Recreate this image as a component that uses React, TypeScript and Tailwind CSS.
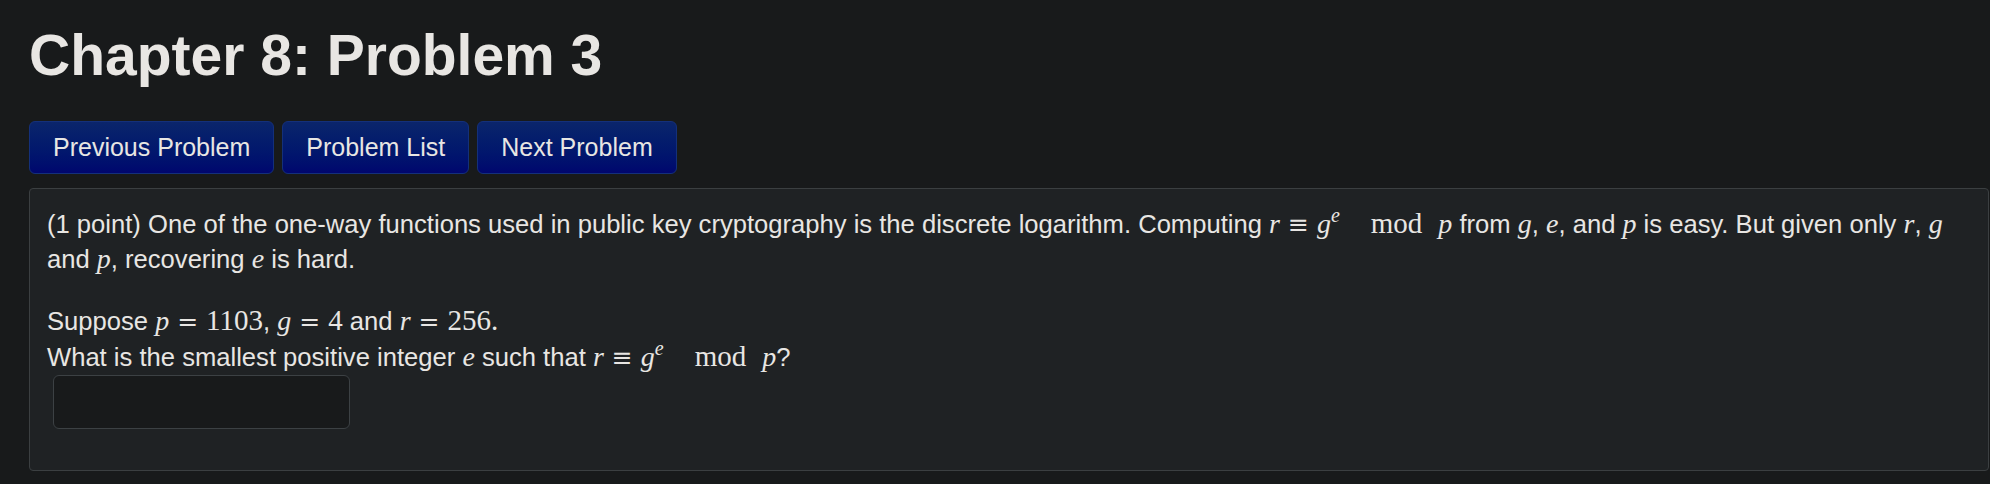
import React from "react";

function V({ children }: { children: React.ReactNode }) {
  return <span className="font-['Liberation_Serif',serif] italic text-[28px] leading-none">{children}</span>;
}

function N({ children }: { children: React.ReactNode }) {
  return <span className="font-['Liberation_Serif',serif] text-[29px] leading-none">{children}</span>;
}

function Rel({ children }: { children: React.ReactNode }) {
  return <span className="font-['DejaVu_Serif',serif] text-[25px] leading-none mx-[8px]">{children}</span>;
}

function Mod() {
  return (
    <span className="font-['Liberation_Serif',serif] text-[29px] leading-none">
      <V>g</V>
      <span className="font-['Liberation_Serif',serif] italic text-[20px] leading-none relative -top-[11px]">e</span>
      <span className="ml-[31px] mr-[16px]">mod</span>
      <V>p</V>
    </span>
  );
}

export default function App() {
  const buttons = ["Previous Problem", "Problem List", "Next Problem"];
  return (
    <div className="min-h-screen bg-[#181a1b] text-[#e8e6e3] font-['Liberation_Sans',Arial,sans-serif] pl-[29px] pr-[1px]">
      <h1 className="pt-[27px] text-[57px] leading-none font-bold">Chapter 8: Problem 3</h1>

      <div className="mt-[37px] flex gap-2">
        {buttons.map((b) => (
          <button
            key={b}
            className="h-[53px] px-[23px] flex items-center rounded-[6px] border border-[#14307a] bg-gradient-to-b from-[#0b256b] to-[#00066e] text-[25px] text-[#e8e6e3]"
          >
            {b}
          </button>
        ))}
      </div>

      <div className="mt-[14px] border border-[#3b3f41] rounded-[4px] bg-[#1f2224] pt-[18px] pl-[17px] pr-[17px] pb-[41px] text-[25.6px] leading-[35px]">
        <p className="mb-[26px]">
          (1 point) One of the one-way functions used in public key cryptography is the discrete logarithm. Computing{" "}
          <V>r</V>
          <Rel>≡</Rel>
          <Mod /> from <V>g</V>, <V>e</V>, and <V>p</V> is easy. But given only <V>r</V>, <V>g</V> and <V>p</V>,
          recovering <V>e</V> is hard.
        </p>
        <p className="leading-[37px]">
          Suppose <V>p</V>
          <Rel>=</Rel>
          <N>1103</N>, <V>g</V>
          <Rel>=</Rel>
          <N>4</N> and <V>r</V>
          <Rel>=</Rel>
          <N>256.</N>
        </p>
        <p>
          What is the smallest positive integer <V>e</V> such that <V>r</V>
          <Rel>≡</Rel>
          <Mod />?
        </p>
        <input
          type="text"
          className="block ml-[6px] w-[297px] h-[54px] rounded-[6px] border border-[#3c4144] bg-[#181a1b] outline-none"
        />
      </div>
    </div>
  );
}
